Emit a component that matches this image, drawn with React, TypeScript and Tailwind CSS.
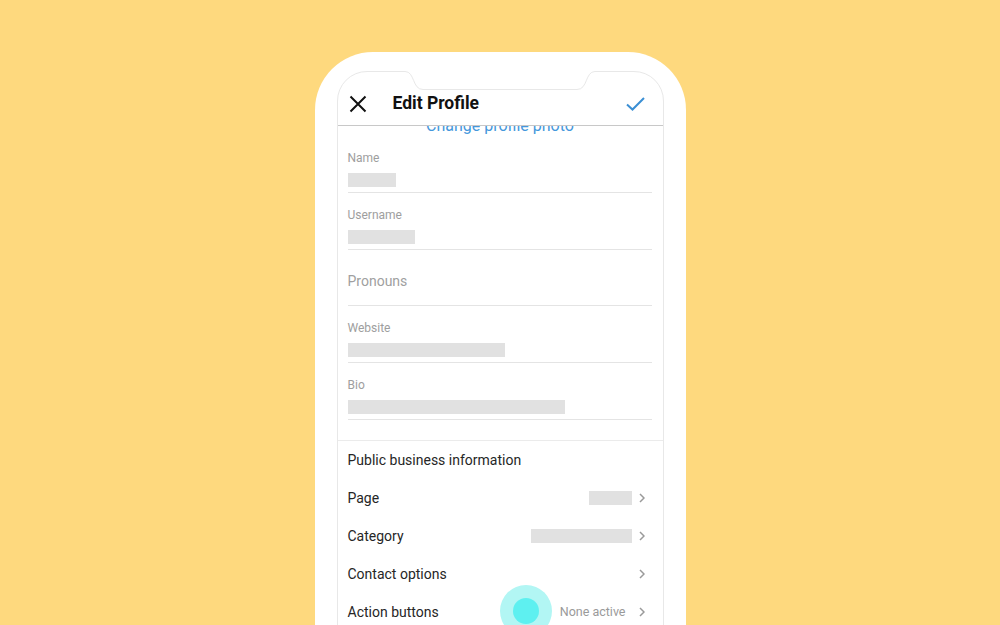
import React from "react";

const fields = [
  { label: "Name", bar: "w-[48px]" },
  { label: "Username", bar: "w-[67px]" },
];

const links = [
  { label: "Website", bar: "w-[157px]" },
  { label: "Bio", bar: "w-[217px]" },
];

function Chevron() {
  return (
    <svg width="6" height="10" viewBox="0 0 6 10" className="shrink-0">
      <path d="M1 1l4 4-4 4" fill="none" stroke="#9a9a9a" strokeWidth="1.5" />
    </svg>
  );
}

function Field({ label, bar }: { label: string; bar: string }) {
  return (
    <div className="border-b border-[#e4e4e4] pt-[15px] pb-[5px]">
      <p className="h-[14px] text-[12px] leading-[14px] text-[#9e9e9e]">{label}</p>
      <div className={`mt-[8px] h-[14px] bg-[#e1e1e1] ${bar}`} />
    </div>
  );
}

function Row({
  label,
  arrow = true,
  gap = "gap-[7px]",
  children,
}: {
  label: string;
  arrow?: boolean;
  gap?: string;
  children?: React.ReactNode;
}) {
  return (
    <div className="flex h-[38px] items-center justify-between pl-[10px] pr-[18px]">
      <span className="text-[14px] text-[#262626]">{label}</span>
      {arrow && (
        <div className={`flex items-center ${gap}`}>
          {children}
          <Chevron />
        </div>
      )}
    </div>
  );
}

export default function App() {
  return (
    <div
      className="flex h-[625px] w-[1000px] justify-center overflow-hidden bg-[#fed97e] pt-[52px]"
      style={{ fontFamily: "Roboto, 'Liberation Sans', sans-serif" }}
    >
      {/* phone body */}
      <div className="h-[640px] w-[371px] shrink-0 rounded-t-[58px] bg-white pl-[22px] pr-[22px] pt-[19px]">
        {/* screen */}
        <div className="relative h-full rounded-t-[30px] border border-[#e8e8e8] bg-white">
          {/* notch */}
          <svg width="190" height="21" viewBox="0 0 190 21" className="absolute -top-[1px] left-[67px]">
            <path d="M0 0 L190 0 L190 1 C180 1 183 18.5 172 18.5 L18 18.5 C7 18.5 10 1 0 1 Z" fill="white" />
            <path d="M0 0.5 C10 0.5 7 18.5 18 18.5 L172 18.5 C183 18.5 180 0.5 190 0.5" fill="none" stroke="#e8e8e8" />
          </svg>

          {/* header */}
          <div className="relative z-10 flex h-[54px] items-center border-b border-[#c8c8c8] px-[11px] pt-[10px]">
            <svg width="18" height="18" viewBox="0 0 18 18">
              <path d="M1.5 1.5l15 15M16.5 1.5l-15 15" stroke="#111" strokeWidth="2" />
            </svg>
            <span className="ml-[26px] text-[17.5px] font-bold text-[#111]">Edit Profile</span>
            <svg width="19" height="14" viewBox="0 0 19 14" className="ml-auto mr-[7px]">
              <path d="M1 7.5l5.5 5L18 1" fill="none" stroke="#3b8fd4" strokeWidth="2" />
            </svg>
          </div>

          {/* scroll content */}
          <div className="relative overflow-hidden">
            <p className="-mt-[10px] h-[20px] text-center text-[16px] leading-[20px] text-[#4597dc]">
              Change profile photo
            </p>

            <div className="pl-[10px] pr-[11px]">
              {fields.map((f) => (
                <Field key={f.label} {...f} />
              ))}
              <div className="border-b border-[#e4e4e4] pt-[22px] pb-[15px]">
                <p className="h-[18px] text-[14px] leading-[18px] text-[#a0a0a0]">Pronouns</p>
              </div>
              {links.map((f) => (
                <Field key={f.label} {...f} />
              ))}
            </div>

            <div className="mt-[20px] border-t border-[#ebebeb]">
              <Row label="Public business information" arrow={false} />
              <Row label="Page">
                <div className="h-[14px] w-[43px] bg-[#e1e1e1]" />
              </Row>
              <Row label="Category">
                <div className="h-[14px] w-[101px] bg-[#e1e1e1]" />
              </Row>
              <Row label="Contact options" />
              <Row label="Action buttons" gap="gap-[13px]">
                <span className="text-[12.5px] text-[#9a9a9a]">None active</span>
              </Row>
            </div>

            {/* touch indicator */}
            <div className="absolute left-[162px] top-[459px] flex h-[52px] w-[52px] items-center justify-center rounded-full bg-[#b2f6f4]">
              <div className="h-[26px] w-[26px] rounded-full bg-[#5ef0f0]" />
            </div>
          </div>
        </div>
      </div>
    </div>
  );
}
